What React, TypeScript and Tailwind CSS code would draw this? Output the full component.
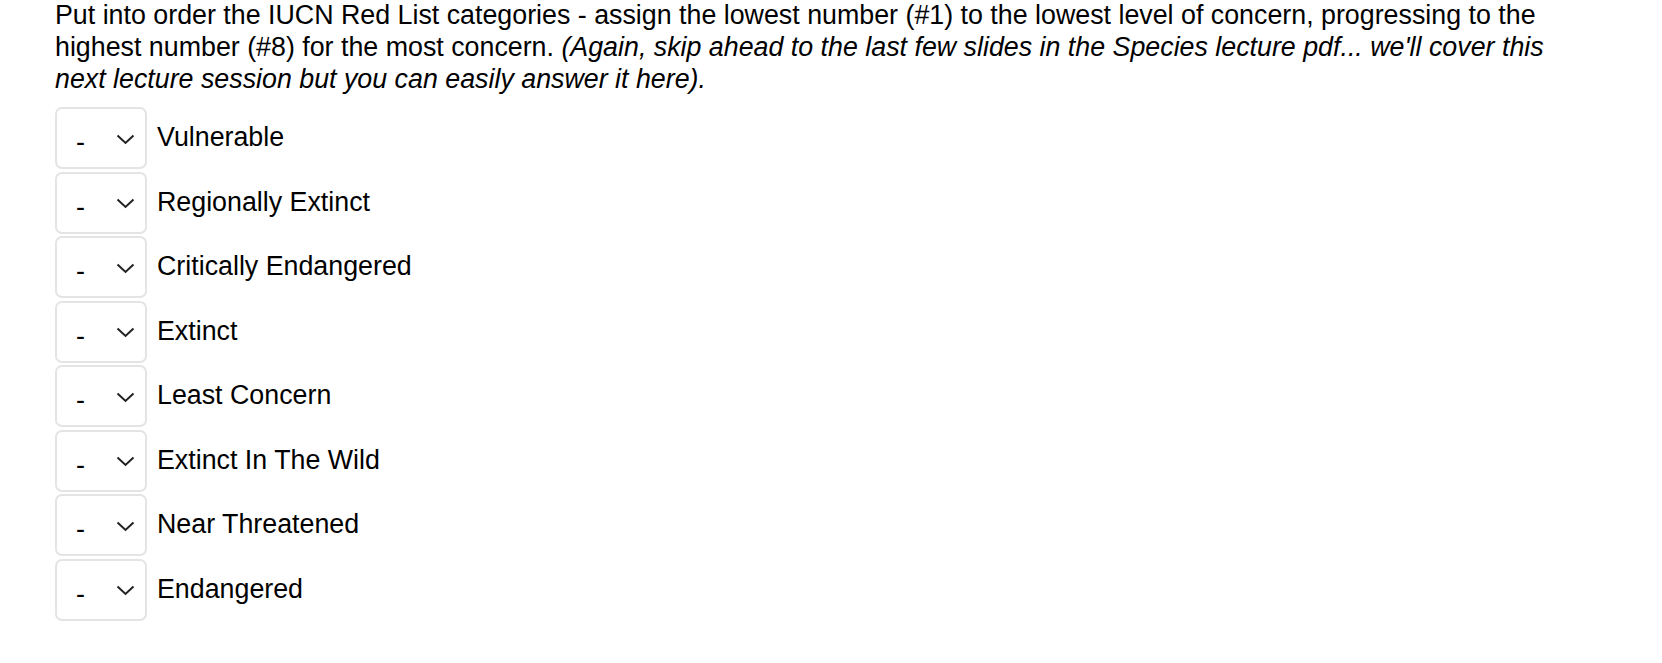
const items = [
  'Vulnerable',
  'Regionally Extinct',
  'Critically Endangered',
  'Extinct',
  'Least Concern',
  'Extinct In The Wild',
  'Near Threatened',
  'Endangered',
]

function Dropdown() {
  return (
    <div className="flex items-center justify-between w-[92px] h-[62px] border-2 border-[#e4e4e4] rounded-[7px] bg-white pl-[19px] pr-[10px] shrink-0">
      <span className="pt-[8px]">-</span>
      <svg width="19" height="11" viewBox="0 0 19 11" fill="none" className="mt-[2px]">
        <path d="M1.5 1.5 L9.5 9 L17.5 1.5" stroke="#222" strokeWidth="2" />
      </svg>
    </div>
  )
}

export default function App() {
  return (
    <div className="bg-white min-h-screen text-black text-[26.8px] leading-[32px] font-['Liberation_Sans',Arial,sans-serif] pl-[55px]">
      <p className="-mt-[1px] w-[1530px]">
        Put into order the IUCN Red List categories - assign the lowest number (#1) to the lowest level of concern, progressing to the highest number (#8) for the most concern.{' '}
        <em>
          (Again, skip ahead to the last few slides in the Species lecture pdf... we'll cover this next lecture session but you can easily answer it here).
        </em>
      </p>
      <div className="mt-[12px] flex flex-col gap-[2.5px]">
        {items.map((name) => (
          <div key={name} className="flex items-center gap-[10px]">
            <Dropdown />
            <span className="-mt-[2px]">{name}</span>
          </div>
        ))}
      </div>
    </div>
  )
}
